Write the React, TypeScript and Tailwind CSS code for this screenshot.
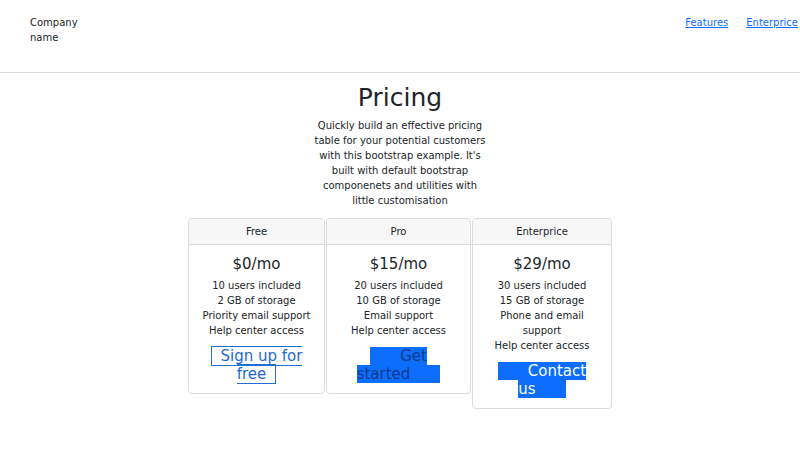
import React from "react";

type Plan = {
  name: string;
  price: string;
  features: string[];
  cta: string;
  variant: "outline" | "dark" | "solid";
  width: string;
};

const plans: Plan[] = [
  {
    name: "Free",
    price: "$0/mo",
    features: ["10 users included", "2 GB of storage", "Priority email support", "Help center access"],
    cta: "Sign up for free",
    variant: "outline",
    width: "w-[137px]",
  },
  {
    name: "Pro",
    price: "$15/mo",
    features: ["20 users included", "10 GB of storage", "Email support", "Help center access"],
    cta: "Get started",
    variant: "dark",
    width: "w-[145px]",
  },
  {
    name: "Enterprice",
    price: "$29/mo",
    features: ["30 users included", "15 GB of storage", "Phone and email support", "Help center access"],
    cta: "Contact us",
    variant: "solid",
    width: "w-[140px]",
  },
];

function CtaButton({ plan }: { plan: Plan }) {
  // inline on purpose: the box breaks across lines like the original
  if (plan.variant === "outline") {
    return (
      <span className="border border-[#1f6fd6] px-[9px] text-[#1f6ad0]">{plan.cta}</span>
    );
  }
  if (plan.variant === "dark") {
    return <span className="bg-[#0d6efd] px-[30px] text-[#0b3a8c]">{plan.cta}</span>;
  }
  return <span className="bg-[#0d6efd] px-[30px] text-white">{plan.cta}</span>;
}

export default function App() {
  return (
    <div className="min-h-screen bg-white text-[10px] leading-[15px] text-[#212529] font-['DejaVu_Sans',sans-serif]">
      {/* Top bar */}
      <header className="flex h-[73px] items-start justify-between border-b border-[#dcdcdc] pl-[30px] pr-[2px] pt-[15px]">
        <div className="w-[56px]">Company name</div>
        <nav className="flex gap-[18px]">
          <a href="#" className="text-[#0d6efd] underline">
            Features
          </a>
          <a href="#" className="text-[#0d6efd] underline">
            Enterprice
          </a>
        </nav>
      </header>

      <main className="flex flex-col items-center">
        <h1 className="mt-[10px] mb-[5px] text-[25px] leading-[30px]">Pricing</h1>
        <p className="w-[176px] text-center">
          Quickly build an effective pricing table for your potential customers with this bootstrap
          example. It's built with default bootstrap componenets and utilities with little
          customisation
        </p>

        {/* Cards */}
        <div className="mt-[10px] flex items-start gap-px">
          {plans.map((plan) => (
            <div
              key={plan.name}
              className={`${plan.width} overflow-hidden rounded-[4px] border border-[#dcdcdc] text-center`}
            >
              <div className="border-b border-[#dcdcdc] bg-[#f7f7f7] py-[5px]">{plan.name}</div>
              <div className="p-[10px]">
                <div className="mb-[5px] text-[15px] leading-[18px]">{plan.price}</div>
                <ul className="mb-[9px]">
                  {plan.features.map((f) => (
                    <li key={f}>{f}</li>
                  ))}
                </ul>
                <div className="text-[15px] leading-[18px]">
                  <CtaButton plan={plan} />
                </div>
              </div>
            </div>
          ))}
        </div>
      </main>
    </div>
  );
}
